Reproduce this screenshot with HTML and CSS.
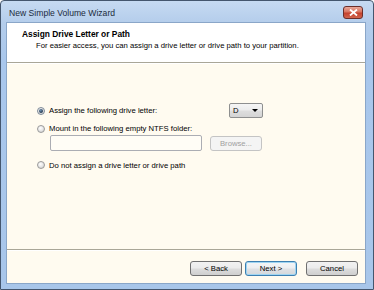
FILE: index.html
```html
<!DOCTYPE html>
<html>
<head>
<meta charset="utf-8">
<link rel="stylesheet" href="styles.css">
</head>
<body>
<div class="window">
  <div class="titlebar">
    <span class="title">New Simple Volume Wizard</span>
    <div class="close"><svg width="9" height="7" viewBox="0 0 9 7"><path d="M1 0.5 L8 6.5 M8 0.5 L1 6.5" stroke="#fff" stroke-width="1.8"/></svg></div>
  </div>
  <div class="client">
    <div class="header">
      <div class="h-title">Assign Drive Letter or Path</div>
      <div class="h-sub">For easier access, you can assign a drive letter or drive path to your partition.</div>
    </div>
    <div class="sep"></div>
    <div class="body">
      <div class="row row1">
        <div class="opt"><span class="radio checked"></span><span>Assign the following drive letter:</span></div>
        <div class="combo"><span>D</span><span class="arrow"></span></div>
      </div>
      <div class="row row2">
        <div class="opt"><span class="radio"></span><span>Mount in the following empty NTFS folder:</span></div>
      </div>
      <div class="row row3">
        <div class="textbox"></div>
        <div class="btn disabled">Browse...</div>
      </div>
      <div class="row row4">
        <div class="opt"><span class="radio"></span><span>Do not assign a drive letter or drive path</span></div>
      </div>
    </div>
    <div class="sep"></div>
    <div class="footer">
      <div class="btn">&lt; Back</div>
      <div class="btn focus">Next &gt;</div>
      <div class="btn cancel">Cancel</div>
    </div>
  </div>
</div>
</body>
</html>
```

FILE: styles.css
```css
html, body {
  margin: 0;
  padding: 0;
  background: #ffffff;
}
body {
  font-family: "Liberation Sans", Arial, sans-serif;
  font-size: 7.7px;
  color: #000;
}
.window {
  width: 374px;
  height: 290px;
  box-sizing: border-box;
  border: 1px solid #44566e;
  border-radius: 4px 4px 0 0;
  background: linear-gradient(to bottom, #c6daf2 0px, #b4cdeb 22px, #a9c7ec 60px, #a8c6ea 100%);
  display: flex;
  flex-direction: column;
}
.titlebar {
  height: 21px;
  display: flex;
  align-items: center;
  padding-left: 8px;
  padding-right: 10px;
  box-sizing: border-box;
}
.title {
  font-size: 8.6px;
  color: #1b2a3c;
  flex: 1;
  padding-top: 2px;
}
.close {
  width: 20px;
  height: 13px;
  box-sizing: border-box;
  border: 1px solid #6b2e2a;
  border-radius: 3px;
  background: linear-gradient(to bottom, #e9a99b 0%, #d8735f 45%, #c4412d 55%, #d0644d 100%);
  display: flex;
  align-items: center;
  justify-content: center;
  margin-top: 1px;
}
.client {
  margin: 0 7px 0 5px;
  width: 360px;
  height: 262px;
  box-sizing: border-box;
  border: 1px solid #8aa6c8;
  background: #fffbf0;
  display: flex;
  flex-direction: column;
}
.header {
  height: 39px;
  background: #ffffff;
  padding-left: 15px;
  box-sizing: border-box;
  padding-top: 6px;
}
.h-title {
  font-weight: bold;
  font-size: 8.4px;
  line-height: 10px;
}
.h-sub {
  padding-left: 14px;
  line-height: 10px;
  margin-top: 2px;
}
.sep {
  height: 1px;
  background: #a9a697;
  border-bottom: 1px solid #ffffff;
}
.body {
  height: 185px;
  padding-top: 39px;
  padding-left: 30px;
  box-sizing: border-box;
  display: flex;
  flex-direction: column;
}
.row {
  display: flex;
  align-items: center;
}
.row1 { height: 15px; }
.row2 { height: 13px; margin-top: 4px; }
.row3 { height: 16px; padding-left: 13px; }
.row4 { height: 12px; margin-top: 8px; }
.opt {
  display: flex;
  align-items: center;
}
.row1 .opt { width: 192px; }
.radio {
  width: 8px;
  height: 8px;
  box-sizing: border-box;
  border-radius: 50%;
  border: 1px solid #9a9a9a;
  background: radial-gradient(circle at 40% 35%, #ffffff 0%, #e6e6e6 50%, #c9c9c9 100%);
  margin-right: 4px;
  position: relative;
}
.radio.checked {
  border-color: #7d8a98;
}
.radio.checked::after {
  content: "";
  position: absolute;
  left: 1px;
  top: 1px;
  width: 4px;
  height: 4px;
  border-radius: 50%;
  background: radial-gradient(circle at 40% 35%, #6d8fb0 0%, #23384f 70%);
}
.combo {
  width: 34px;
  height: 15px;
  box-sizing: border-box;
  border: 1px solid #8e8f8f;
  border-radius: 2px;
  background: linear-gradient(to bottom, #f5f5f5 0%, #ececec 48%, #dedede 52%, #d4d4d4 100%);
  display: flex;
  align-items: center;
  justify-content: space-between;
  padding: 0 4px 0 3px;
}
.arrow {
  width: 0;
  height: 0;
  border-left: 3px solid transparent;
  border-right: 3px solid transparent;
  border-top: 3px solid #000;
}
.textbox {
  width: 152px;
  height: 16px;
  box-sizing: border-box;
  border: 1px solid #abadb3;
  border-radius: 2px;
  background: #fffdf6;
}
.btn {
  width: 52px;
  height: 15px;
  box-sizing: border-box;
  border: 1px solid #707070;
  border-radius: 3px;
  background: linear-gradient(to bottom, #f2f2f2 0%, #ebebeb 48%, #dddddd 52%, #cfcfcf 100%);
  display: flex;
  align-items: center;
  justify-content: center;
}
.btn.disabled {
  margin-left: 8px;
  border-color: #c4c4c4;
  background: #f4f4f4;
  color: #a0a0a0;
}
.btn.focus {
  border-color: #3c7fb1;
  box-shadow: inset 0 0 0 1px #9fd5f2;
  background: linear-gradient(to bottom, #f4f6f8 0%, #eceef0 48%, #dfe2e5 52%, #d3d7db 100%);
}
.footer {
  flex: 1;
  display: flex;
  justify-content: flex-end;
  padding-top: 10px;
  padding-right: 7px;
  box-sizing: border-box;
  gap: 3px;
}
.btn.cancel {
  margin-left: 6px;
}
```
